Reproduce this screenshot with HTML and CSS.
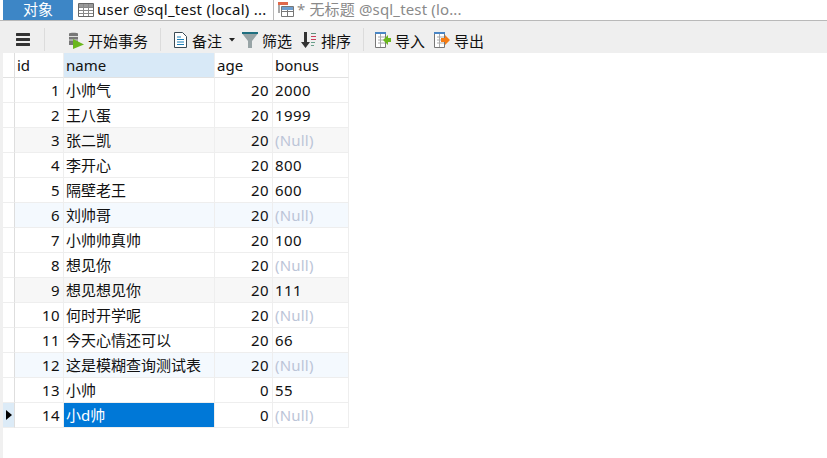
FILE: index.html
```html
<!DOCTYPE html>
<html lang="zh">
<head>
<meta charset="utf-8">
<title>user @sql_test (local)</title>
<link rel="stylesheet" href="styles.css">
</head>
<body>
<div class="tabs">
  <div class="tab tab-objects">对象</div>
  <div class="tab tab-user">
    <svg class="tab-icon" width="16" height="14" viewBox="0 0 16 14"><path d="M.5.500h15v13H.5z" fill="#fff" stroke="#666"/><path d="M1 1h14v3H1z" fill="#999"/><path d="M1 4.500h14M1 7.500h14M1 10.500h14M5.500 1v12M10.500 1v12" stroke="#888" fill="none"/></svg>
    <span class="tab-label">user @sql_test (local) ...</span>
  </div>
  <div class="tab tab-query">
    <svg class="tab-icon" width="17" height="16" viewBox="0 0 17 16"><path d="M0 0h10v3H0z" fill="#e0684a"/><path d="M0 3h2v8H0z" fill="#aaa"/><path d="M3.500 4.500h12v10h-12z" fill="#fff" stroke="#777"/><path d="M4 5h11v3H4z" fill="#6f9fd0"/><path d="M4 9.500h11M9.500 8v6" stroke="#777" fill="none"/></svg>
    <span class="tab-label">* 无标题 @sql_test (lo...</span>
  </div>
</div>
<div class="toolbar">
  <button class="tool tool-menu" aria-label="菜单"><svg width="14" height="13" viewBox="0 0 14 13"><path d="M1 1.500h12M1 6.500h12M1 11.500h12" stroke="#333" stroke-width="3" stroke-linecap="round"/></svg></button>
  <i class="sep"></i>
  <button class="tool tool-begin">
    <svg width="16" height="17" viewBox="0 0 16 17"><path d="M1 1.500C1 .5 10 .5 10 1.500V13H1z" fill="#777"/><path d="M1 4.500h9M1 8h9" stroke="#ddd"/><path d="M5 7l11 5.500L5 17z" fill="#6ab71e"/></svg>
    <span>开始事务</span>
  </button>
  <i class="sep"></i>
  <button class="tool tool-note">
    <svg width="14" height="16" viewBox="0 0 14 16"><path d="M1.500.500h8l4 4v11h-12z" fill="#fff" stroke="#3b4a55"/><path d="M4 5h4M4 7.500h7M4 10h7M4 12.500h7" stroke="#1b7fb8"/></svg>
    <span>备注</span>
    <svg class="caret" width="6" height="4" viewBox="0 0 6 4"><path d="M0 0h6L3 3.500z" fill="#222"/></svg>
  </button>
  <button class="tool tool-filter">
    <svg width="16" height="16" viewBox="0 0 16 16"><path d="M0 0h16v2H0z" fill="#1f6f80"/><path d="M.5 2h15L10 9v7H6V9z" fill="#98a4a6"/></svg>
    <span>筛选</span>
  </button>
  <button class="tool tool-sort">
    <svg width="16" height="16" viewBox="0 0 16 16"><path d="M3 0h3v10h3l-4.500 6L0 10h3z" fill="#333"/><path d="M10 1.500h5" stroke="#5a8f7a"/><path d="M10 4.500h5M10 7.500h5" stroke="#c9405a"/><path d="M10 10.500h4M10 13.500h3" stroke="#6aa08c"/></svg>
    <span>排序</span>
  </button>
  <i class="sep sep-wide"></i>
  <button class="tool tool-import">
    <svg width="16" height="16" viewBox="0 0 16 16"><path d="M.5.500h10v15H.500z" fill="#fff" stroke="#777"/><path d="M0 0h11v2H0z" fill="#4a86c5"/><path d="M3 5h7M3 8h7M3 11h7M5.500 2v13" stroke="#aaa"/><path d="M8 8l5-5v3h3v4h-3v3z" fill="#6ab71e"/></svg>
    <span>导入</span>
  </button>
  <button class="tool tool-export">
    <svg width="16" height="16" viewBox="0 0 16 16"><path d="M.5.500h10v15H.500z" fill="#fff" stroke="#777"/><path d="M0 0h11v2H0z" fill="#4a86c5"/><path d="M3 5h7M3 8h7M3 11h7M5.500 2v13" stroke="#aaa"/><path d="M7 6h4V3l5 5-5 5v-3H7z" fill="#f57c14"/></svg>
    <span>导出</span>
  </button>
</div>
<main class="content">
  <table class="grid">
    <thead>
      <tr><th class="gutter"></th><th class="c-id">id</th><th class="c-name active">name</th><th class="c-age">age</th><th class="c-bonus">bonus</th></tr>
    </thead>
    <tbody>
      <tr><td class="gutter"></td><td class="n">1</td><td>小帅气</td><td class="n">20</td><td class="v">2000</td></tr>
      <tr><td class="gutter"></td><td class="n">2</td><td>王八蛋</td><td class="n">20</td><td class="v">1999</td></tr>
      <tr class="gray"><td class="gutter"></td><td class="n">3</td><td>张二凯</td><td class="n">20</td><td class="null">(Null)</td></tr>
      <tr><td class="gutter"></td><td class="n">4</td><td>李开心</td><td class="n">20</td><td class="v">800</td></tr>
      <tr><td class="gutter"></td><td class="n">5</td><td>隔壁老王</td><td class="n">20</td><td class="v">600</td></tr>
      <tr class="blue"><td class="gutter"></td><td class="n">6</td><td>刘帅哥</td><td class="n">20</td><td class="null">(Null)</td></tr>
      <tr><td class="gutter"></td><td class="n">7</td><td>小帅帅真帅</td><td class="n">20</td><td class="v">100</td></tr>
      <tr><td class="gutter"></td><td class="n">8</td><td>想见你</td><td class="n">20</td><td class="null">(Null)</td></tr>
      <tr class="gray"><td class="gutter"></td><td class="n">9</td><td>想见想见你</td><td class="n">20</td><td class="v">111</td></tr>
      <tr><td class="gutter"></td><td class="n">10</td><td>何时开学呢</td><td class="n">20</td><td class="null">(Null)</td></tr>
      <tr><td class="gutter"></td><td class="n">11</td><td>今天心情还可以</td><td class="n">20</td><td class="v">66</td></tr>
      <tr class="blue"><td class="gutter"></td><td class="n">12</td><td>这是模糊查询测试表</td><td class="n">20</td><td class="null">(Null)</td></tr>
      <tr><td class="gutter"></td><td class="n">13</td><td>小帅</td><td class="n">0</td><td class="v">55</td></tr>
      <tr class="current"><td class="gutter"><svg class="pointer" width="6" height="10" viewBox="0 0 6 10"><path d="M0 0l6 5-6 5z" fill="#000"/></svg></td><td class="n">14</td><td class="selected">小d帅</td><td class="n">0</td><td class="null">(Null)</td></tr>
    </tbody>
  </table>
</main>
</body>
</html>
```
FILE: styles.css
```css
* { box-sizing: border-box; }
html, body { height: 100%; }
body {
  margin: 0;
  display: flex;
  flex-direction: column;
  overflow: hidden;
  background: #fff;
  color: #111;
  font: 15px "Noto Sans", "Noto Sans CJK SC", sans-serif;
}
.tabs {
  flex: none;
  display: flex;
  height: 21px;
  padding-left: 3px;
  border-bottom: 1px solid #b9b9b9;
  line-height: 19px;
}
.tab {
  display: flex;
  align-items: center;
  height: 20px;
  white-space: nowrap;
}
.tab-label { margin-bottom: 2px; }
.tab-objects {
  width: 70px;
  padding-bottom: 2px;
  justify-content: center;
  background: #3d86c6;
  color: #fff;
}
.tab-user {
  width: 197px;
  gap: 3px;
  padding-left: 5px;
  letter-spacing: .24px;
}
.tab-query {
  flex: 1;
  gap: 2px;
  padding-left: 4px;
  border-left: 1px solid #b9b9b9;
  color: #8a8a8a;
  margin-left: 3px;
  letter-spacing: .15px;
}
.tab-icon { flex: none; }
.toolbar {
  flex: none;
  display: flex;
  align-items: center;
  height: 32px;
  padding-top: 4px;
  background: #efefef;
}
.tool {
  display: flex;
  align-items: center;
  gap: 5px;
  margin-top: 2px;
  padding: 0;
  border: 0;
  background: none;
  color: #111;
  font: inherit;
}
.tool-menu { margin: 0 0 0 16px; }
.tool-begin { margin-left: 23px; gap: 4px; }
.tool-note { margin-left: 12px; gap: 5px; }
.tool-filter { margin-left: 7px; gap: 4px; }
.tool-sort { margin-left: 9px; gap: 4px; }
.tool-import { margin-left: 11px; gap: 4px; }
.tool-export { margin-left: 9px; gap: 4px; }
.caret { margin-left: 2px; }
.sep {
  display: block;
  width: 1px;
  height: 23px;
  margin-left: 14px;
  background: #dcdcdc;
}
.tool-begin + .sep { margin-left: 12px; }
.sep-wide { margin-left: 12px; }
.content {
  flex: 1;
  padding-left: 3px;
  background: linear-gradient(to right, #f0f0f0 3px, #fff 3px);
}
.grid {
  table-layout: fixed;
  width: 346px;
  border-collapse: separate;
  border-spacing: 0;
}
.grid th, .grid td {
  height: 25px;
  padding: 0 2px;
  border-right: 1px solid #eee;
  border-bottom: 1px solid #eee;
  font-weight: 400;
  text-align: left;
  white-space: nowrap;
  overflow: hidden;
  line-height: 24px;
}
.grid th.gutter, .grid td.gutter {
  width: 12px;
  padding: 0;
  border-right-color: #dedede;
  vertical-align: middle;
}
.c-id { width: 49px; }
.c-name { width: 151px; }
.c-age { width: 58px; }
.c-bonus { width: 76px; }
.grid th { border-bottom-color: #e2e2e2; }
.grid th.active { background: #d8e9f7; }
.grid td.n { padding-right: 3px; text-align: right; letter-spacing: .4px; }
.grid td.v { letter-spacing: .4px; }
.grid td.null { color: #bcc5d8; letter-spacing: .2px; }
.gray td:not(.gutter) { background: #f7f7f7; }
.blue td:not(.gutter) { background: #f4f9fe; }
.current td.gutter { background: #dcebf7; }
.grid td.selected { background: #0078d7; color: #fff; }
.pointer { display: block; margin: 0 0 0 3px; }
```
